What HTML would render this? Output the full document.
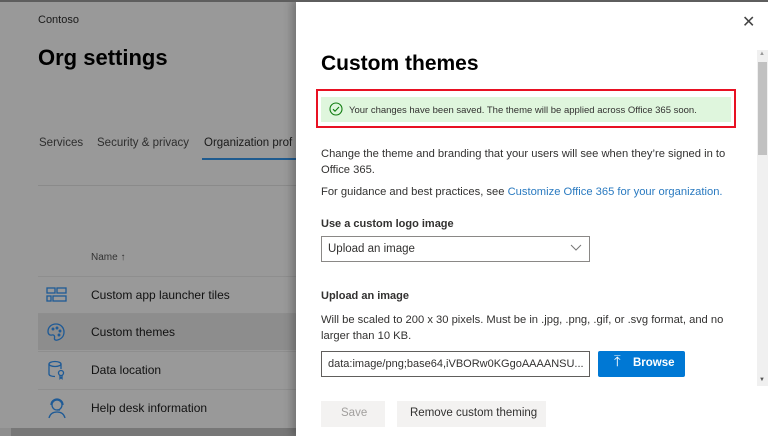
<!DOCTYPE html>
<html><head><meta charset="utf-8"><style>
*{margin:0;padding:0;box-sizing:border-box}
body{width:768px;height:436px;overflow:hidden;position:relative;font-family:"Liberation Sans",sans-serif;background:#9a9a9a}
.topline{position:absolute;left:0;top:0;width:768px;height:2px;background:#5e5e5e;z-index:5}
.left{position:absolute;left:0;top:0;width:296px;height:436px;background:#999;color:#111}
.a{position:absolute;white-space:nowrap}
.row{position:absolute;left:38px;width:258px;height:37px;border-top:1px solid #8e8e8e}
.panel{position:absolute;left:296px;top:0;width:472px;height:436px;background:#fff;box-shadow:-4px 0 8px rgba(0,0,0,.25)}
.p{position:absolute;white-space:nowrap;color:#323130;font-size:11.2px}
</style></head><body>
<div class="topline"></div>
<div class="left">
 <div class="a" style="left:38px;top:14px;font-size:11px;color:#1a1a1a">Contoso</div>
 <div class="a" style="left:38px;top:45px;font-size:22px;font-weight:bold;color:#000">Org settings</div>
 <div class="a" style="left:39px;top:137px;font-size:11.5px;color:#2e2e2e">Services</div>
 <div class="a" style="left:97px;top:137px;font-size:11.5px;color:#2e2e2e">Security &amp; privacy</div>
 <div class="a" style="left:204px;top:137px;font-size:11.5px;color:#1a1a1a">Organization prof</div>
 <div class="a" style="left:202px;top:158px;width:94px;height:2px;background:#1f5b8f"></div>
 <div class="a" style="left:38px;top:185px;width:258px;height:1px;background:#8a8a8a"></div>
 <div class="a" style="left:91px;top:252px;font-size:10px;color:#333">Name ↑</div>
 <div class="row" style="top:276px"></div>
 <div class="row" style="top:313px;background:#8d8d8d"></div>
 <div class="row" style="top:351px"></div>
 <div class="row" style="top:389px"></div>
 <div class="a" style="left:91px;top:288px;font-size:12px">Custom app launcher tiles</div>
 <div class="a" style="left:91px;top:325px;font-size:12px">Custom themes</div>
 <div class="a" style="left:91px;top:363px;font-size:12px">Data location</div>
 <div class="a" style="left:91px;top:401px;font-size:12px">Help desk information</div>
 <svg class="a" style="left:46px;top:287px" width="22" height="16" viewBox="0 0 22 16" fill="none" stroke="#1e5a96" stroke-width="1.3"><rect x="1" y="1" width="8" height="5"/><rect x="11" y="1" width="9" height="5"/><rect x="1" y="9" width="4" height="5"/><rect x="7" y="9" width="13" height="5"/></svg>
 <svg class="a" style="left:46px;top:322px" width="20" height="20" viewBox="0 0 20 20" fill="none" stroke="#1e5a96" stroke-width="1.3"><path d="M10 2C5 2 2 5.5 2 9.5c0 3 2 4 4 3.5 2-.5 3 1 2.5 3-.5 2 1.5 2.5 3 2 4-1 6.5-4 6.5-8S15 2 10 2z"/><circle cx="7" cy="7" r=".8"/><circle cx="11" cy="6" r=".8"/><circle cx="14" cy="9" r=".8"/><circle cx="13" cy="13" r=".8"/></svg>
 <svg class="a" style="left:47px;top:360px" width="20" height="20" viewBox="0 0 20 20" fill="none" stroke="#1e5a96" stroke-width="1.3"><ellipse cx="8" cy="4" rx="6" ry="2.5"/><path d="M2 4v10c0 1.5 2.5 2.5 6 2.5M14 4v5"/><circle cx="14" cy="13" r="2.5"/><path d="M13 15.5v3l1-.8 1 .8v-3"/></svg>
 <svg class="a" style="left:47px;top:397px" width="20" height="22" viewBox="0 0 20 22" fill="none" stroke="#1e5a96" stroke-width="1.3"><circle cx="10" cy="8" r="5"/><path d="M4 8a6 6 0 0 1 12 0M10 13h3M2 21c1-4 4-6 8-6s7 2 8 6"/></svg>
 <div class="a" style="left:0;top:428px;width:296px;height:8px;background:#777"></div>
 <div class="a" style="left:0;top:428px;width:11px;height:8px;background:#8e8e8e"></div>
</div>
<div class="panel">
 <div class="a" style="left:446px;top:12px;font-size:16px;color:#444">✕</div>
 <div class="p" style="left:25px;top:52px;font-size:21px;font-weight:bold;color:#000">Custom themes</div>
 <div class="a" style="left:20px;top:89px;width:420px;height:39px;border:2px solid #e81123"></div>
 <div class="a" style="left:25px;top:97px;width:410px;height:25px;background:#dff6dd"></div>
 <svg class="a" style="left:33px;top:102px" width="14" height="14" viewBox="0 0 14 14" fill="none" stroke="#107c10" stroke-width="1.1"><circle cx="7" cy="7" r="6"/><path d="M4 7.2l2 2 4-4.2"/></svg>
 <div class="p" style="left:53px;top:105px;font-size:9.5px">Your changes have been saved. The theme will be applied across Office 365 soon.</div>
 <div class="p" style="left:25px;top:148px">Change the theme and branding that your users will see when they’re signed in to</div>
 <div class="p" style="left:25px;top:164px">Office 365.</div>
 <div class="p" style="left:25px;top:186px">For guidance and best practices, see <span style="color:#2a7ac0">Customize Office 365 for your organization.</span></div>
 <div class="p" style="left:25px;top:218px;font-weight:bold;font-size:11px">Use a custom logo image</div>
 <div class="a" style="left:25px;top:236px;width:269px;height:26px;border:1px solid #8a8886"></div>
 <div class="p" style="left:32px;top:243px;font-size:11.5px">Upload an image</div>
 <svg class="a" style="left:274px;top:244px" width="12" height="8" viewBox="0 0 12 8" fill="none" stroke="#777" stroke-width="1"><path d="M1 1l5 5 5-5"/></svg>
 <div class="p" style="left:25px;top:290px;font-weight:bold;font-size:11px">Upload an image</div>
 <div class="p" style="left:25px;top:314px">Will be scaled to 200 x 30 pixels. Must be in .jpg, .png, .gif, or .svg format, and no</div>
 <div class="p" style="left:25px;top:330px">larger than 10 KB.</div>
 <div class="a" style="left:25px;top:351px;width:269px;height:26px;border:1px solid #605e5c"></div>
 <div class="p" style="left:32px;top:358px;font-size:11px;width:255px;overflow:hidden">data:image/png;base64,iVBORw0KGgoAAAANSU...</div>
 <div class="a" style="left:302px;top:351px;width:87px;height:26px;background:#0078d4;border-radius:2px"></div>
 <div class="a" style="left:318px;top:353px;color:#fff;font-size:15px">⤒</div>
 <div class="a" style="left:337px;top:357px;color:#fff;font-size:11.5px;font-weight:bold">Browse</div>
 <div class="a" style="left:25px;top:401px;width:64px;height:26px;background:#f3f2f1"></div>
 <div class="p" style="left:45px;top:407px;color:#a19f9d;font-size:11.5px">Save</div>
 <div class="a" style="left:101px;top:401px;width:149px;height:26px;background:#f3f2f1"></div>
 <div class="p" style="left:114px;top:407px;font-size:11.5px">Remove custom theming</div>
 <div class="a" style="left:461px;top:50px;width:11px;height:336px;background:#f0f0f0"></div>
 <div class="a" style="left:462px;top:62px;width:9px;height:93px;background:#c1c1c1"></div>
 <div class="a" style="left:463px;top:51px;font-size:6px;color:#999">▲</div>
 <div class="a" style="left:463px;top:377px;font-size:6px;color:#555">▼</div>
</div>
</body></html>
